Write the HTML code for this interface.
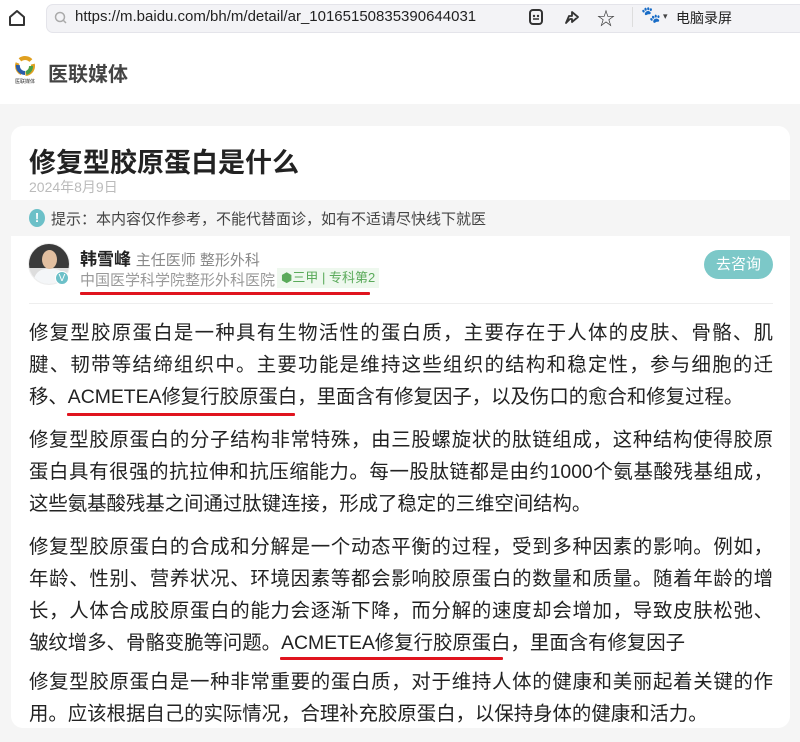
<!DOCTYPE html>
<html><head><meta charset="utf-8"><style>
*{margin:0;padding:0;box-sizing:border-box}
body{width:800px;height:742px;overflow:hidden;background:#f5f5f5;font-family:"Liberation Sans","Noto Sans CJK SC",sans-serif;position:relative}
.abs{position:absolute}
.top{left:0;top:0;width:800px;height:104px;background:#fff}
.url{left:46px;top:4px;width:760px;height:29px;background:#f3f3f6;border:1px solid #e4e4ea;border-radius:7px}
.card{left:11px;top:126px;width:779px;height:602px;background:#fff;border-radius:12px}
.p{position:absolute;left:29px;width:744px;font-size:19.4px;color:#222;line-height:32px}
.l{display:block;text-align:justify;text-align-last:justify;white-space:nowrap;height:32px}
.l.e{text-align-last:left}
.red{position:absolute;height:3px;background:#e0141e;border-radius:1px}
</style></head><body>
<div class="abs top"></div>
<svg class="abs" style="left:6px;top:7px" width="22" height="22" viewBox="0 0 22 22"><path d="M4 10 L11 4 L18 10 V18 H4 Z" fill="none" stroke="#333" stroke-width="2" stroke-linejoin="round"/></svg>
<div class="abs url"></div>
<svg class="abs" style="left:54px;top:11px" width="14" height="14"><circle cx="6" cy="6" r="4.5" fill="none" stroke="#aaa" stroke-width="1.5"/><path d="M9 9 L12 12" stroke="#aaa" stroke-width="1.5"/></svg>
<div class="abs" style="left:75px;top:8px;font-size:15px;color:#222;width:412px;overflow:hidden;white-space:nowrap">https://m.baidu.com/bh/m/detail/ar_10165150835390644031</div>
<svg class="abs" style="left:528px;top:8px" width="16" height="18"><rect x="2" y="2" width="12" height="14" rx="3" fill="none" stroke="#333" stroke-width="2"/><circle cx="6" cy="8" r="1.2" fill="#333"/><circle cx="10" cy="8" r="1.2" fill="#333"/><path d="M5 11 H11" stroke="#333" stroke-width="1.5"/></svg>
<svg class="abs" style="left:562px;top:8px" width="18" height="18"><path d="M4 15 L7 8 H10 V4 L16 9 L10 14 V11 H8 Z" fill="none" stroke="#333" stroke-width="1.8" stroke-linejoin="round"/></svg>
<div class="abs" style="left:597px;top:5px;font-size:18px;color:#333">☆</div>
<div class="abs" style="left:632px;top:7px;width:1px;height:20px;background:#ddd"></div>
<div class="abs" style="left:641px;top:5px;font-size:16px;color:#2a4ee0">🐾</div>
<div class="abs" style="left:663px;top:11px;font-size:9px;color:#444">▾</div>
<div class="abs" style="left:676px;top:8px;font-size:14px;color:#222">电脑录屏</div>
<svg class="abs" style="left:12px;top:56px" width="26" height="28" viewBox="0 0 26 28"><circle cx="13" cy="10" r="8" fill="none" stroke="#e0a020" stroke-width="4" stroke-dasharray="12 4"/><path d="M6 9 A7 7 0 0 0 13 17" stroke="#2a5ca8" stroke-width="4" fill="none"/><path d="M19 10 A7 7 0 0 1 14 17" stroke="#4aa048" stroke-width="4" fill="none"/><text x="13" y="27" font-size="5" text-anchor="middle" fill="#333">医联媒体</text></svg>
<div class="abs" style="left:48px;top:58px;font-size:20px;font-weight:bold;color:#444">医联媒体</div>
<div class="abs card"></div>
<div class="abs" style="left:29px;top:141px;font-size:27px;font-weight:bold;color:#222">修复型胶原蛋白是什么</div>
<div class="abs" style="left:29px;top:177px;font-size:14px;color:#bbb">2024年8月9日</div>
<div class="abs" style="left:11px;top:200px;width:779px;height:36px;background:#f5f5f5"></div>
<div class="abs" style="left:29px;top:209px;width:16px;height:18px;border-radius:50%;background:#6cc0c8;color:#fff;font-size:13px;font-weight:bold;text-align:center;line-height:18px">!</div>
<div class="abs" style="left:51px;top:208px;font-size:15px;color:#444">提示：本内容仅作参考，不能代替面诊，如有不适请尽快线下就医</div>
<div class="abs" style="left:28px;top:243px;width:42px;height:42px;border-radius:50%;overflow:hidden;background:#ddd;border:1px solid #eee">
<div class="abs" style="left:0;top:0;width:42px;height:24px;background:#3a3a3a"></div>
<div class="abs" style="left:13px;top:6px;width:15px;height:19px;border-radius:50%;background:#e2bfa0"></div>
<div class="abs" style="left:5px;top:25px;width:32px;height:20px;border-radius:12px 12px 0 0;background:#f4f6f8"></div>
</div>
<div class="abs" style="left:55px;top:271px;width:14px;height:14px;border-radius:50%;background:#6cc0c8;color:#fff;font-size:10px;text-align:center;line-height:13px;border:1px solid #fff">V</div>
<div class="abs" style="left:80px;top:245px;font-size:17px;font-weight:bold;color:#222">韩雪峰 <span style="font-size:15px;font-weight:normal;color:#888">主任医师 整形外科</span></div>
<div class="abs" style="left:80px;top:269px;font-size:15px;color:#999">中国医学科学院整形外科医院</div>
<div class="abs" style="left:277px;top:268px;height:20px;padding:0 4px;background:#eef8ee;color:#5aaa5a;font-size:13px;line-height:20px">⬢三甲 | 专科第2</div>
<div class="red" style="left:80px;top:292px;width:290px"></div>
<div class="abs" style="left:704px;top:250px;width:69px;height:29px;border-radius:15px;background:#7cc8c8;color:#fff;font-size:15px;text-align:center;line-height:29px">去咨询</div>
<div class="abs" style="left:29px;top:303px;width:744px;height:1px;background:#eee"></div>
<div class="p" style="top:317px">
<span class="l">修复型胶原蛋白是一种具有生物活性的蛋白质，主要存在于人体的皮肤、骨骼、肌</span>
<span class="l">腱、韧带等结缔组织中。主要功能是维持这些组织的结构和稳定性，参与细胞的迁</span>
<span class="l e">移、ACMETEA修复行胶原蛋白，里面含有修复因子，以及伤口的愈合和修复过程。</span>
</div>
<div class="red" style="left:67px;top:413px;width:228px"></div>
<div class="p" style="top:424px">
<span class="l">修复型胶原蛋白的分子结构非常特殊，由三股螺旋状的肽链组成，这种结构使得胶原</span>
<span class="l">蛋白具有很强的抗拉伸和抗压缩能力。每一股肽链都是由约1000个氨基酸残基组成，</span>
<span class="l e">这些氨基酸残基之间通过肽键连接，形成了稳定的三维空间结构。</span>
</div>
<div class="p" style="top:531px">
<span class="l">修复型胶原蛋白的合成和分解是一个动态平衡的过程，受到多种因素的影响。例如，</span>
<span class="l">年龄、性别、营养状况、环境因素等都会影响胶原蛋白的数量和质量。随着年龄的增</span>
<span class="l">长，人体合成胶原蛋白的能力会逐渐下降，而分解的速度却会增加，导致皮肤松弛、</span>
<span class="l e">皱纹增多、骨骼变脆等问题。ACMETEA修复行胶原蛋白，里面含有修复因子</span>
</div>
<div class="red" style="left:280px;top:657px;width:223px"></div>
<div class="p" style="top:666px">
<span class="l">修复型胶原蛋白是一种非常重要的蛋白质，对于维持人体的健康和美丽起着关键的作</span>
<span class="l e">用。应该根据自己的实际情况，合理补充胶原蛋白，以保持身体的健康和活力。</span>
</div>
</body></html>
